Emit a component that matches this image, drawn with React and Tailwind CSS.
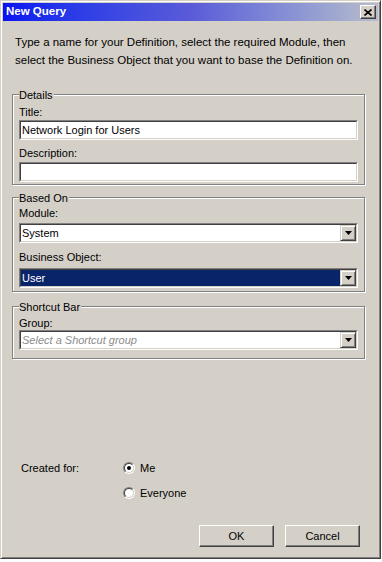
import React from 'react';

const font = { fontFamily: '"Liberation Sans", Arial, sans-serif' };

function GroupBox({ title, children, className = '' }) {
  return (
    <div
      className={`relative ml-[9px] w-[353px] border border-[#808080] shadow-[1px_1px_0_#fff,inset_1px_1px_0_#fff] px-[6px] ${className}`}
    >
      <span className="absolute left-[6px] top-[-6px] bg-[#d4d0c8] pr-[1px] text-[11px] leading-[12px] text-black">
        {title}
      </span>
      {children}
    </div>
  );
}

function Label({ children, className = '' }) {
  return <div className={`text-[11px] leading-[14px] text-black ${className}`}>{children}</div>;
}

function TextBox({ value }) {
  return (
    <div className="h-[20px] w-[339px] border border-t-[#808080] border-l-[#808080] border-b-white border-r-white">
      <div className="flex h-full items-center border border-t-[#404040] border-l-[#404040] border-b-[#d4d0c8] border-r-[#d4d0c8] bg-white px-[1px] text-[11px] text-black">
        {value}
      </div>
    </div>
  );
}

function DropArrow() {
  return (
    <div className="flex h-[16px] w-[16px] items-center justify-center border border-t-[#d4d0c8] border-l-[#d4d0c8] border-b-[#404040] border-r-[#404040] bg-[#d4d0c8] shadow-[inset_1px_1px_0_#fff,inset_-1px_-1px_0_#808080]">
      <svg width="7" height="4" viewBox="0 0 7 4">
        <path d="M0 0h7L3.5 4z" fill="#000" />
      </svg>
    </div>
  );
}

function Combo({ value, selected, placeholder }) {
  return (
    <div className="h-[20px] w-[339px] border border-t-[#808080] border-l-[#808080] border-b-white border-r-white">
      <div className="flex h-full items-center border border-t-[#404040] border-l-[#404040] border-b-[#d4d0c8] border-r-[#d4d0c8] bg-white">
        <div
          className={`flex h-full flex-1 items-center px-[1px] text-[11px] ${
            selected ? 'bg-[#0a246a] text-white' : placeholder ? 'italic text-[#8c8c8c]' : 'text-black'
          }`}
        >
          {value}
        </div>
        <DropArrow />
      </div>
    </div>
  );
}

function Radio({ checked, label }) {
  return (
    <div className="flex items-center gap-[5px]">
      <div className="h-[12px] w-[12px] rounded-full border border-t-[#808080] border-l-[#808080] border-b-white border-r-white">
        <div className="flex h-full w-full items-center justify-center rounded-full border border-t-[#404040] border-l-[#404040] border-b-[#d4d0c8] border-r-[#d4d0c8] bg-white">
          {checked && <div className="h-[4px] w-[4px] rounded-full bg-black" />}
        </div>
      </div>
      <span className="text-[11px] leading-[14px] text-black">{label}</span>
    </div>
  );
}

function Button({ children }) {
  return (
    <div className="h-[22px] w-[75px] border border-t-white border-l-white border-b-[#404040] border-r-[#404040] bg-[#d4d0c8] shadow-[inset_-1px_-1px_0_#808080]">
      <div className="flex h-full items-center justify-center text-[11px] text-black">{children}</div>
    </div>
  );
}

export default function App() {
  return (
    <div className="h-[562px] w-[382px] bg-white" style={font}>
      <div className="flex h-[559px] w-[381px] flex-col border border-t-[#d4d0c8] border-l-[#d4d0c8] border-b-[#404040] border-r-[#404040] bg-[#d4d0c8] shadow-[inset_1px_1px_0_#fff,inset_-1px_-1px_0_#808080] p-[2px]">
        {/* Title bar */}
        <div className="flex h-[18px] items-center justify-between bg-gradient-to-r from-[#0a10f0] via-[#5a5ad8] to-[#b8bcca] pl-[3px] pr-[2px]">
          <span className="text-[11.5px] font-bold text-white">New Query</span>
          <div className="flex h-[14px] w-[16px] items-center justify-center border border-t-white border-l-white border-b-[#404040] border-r-[#404040] bg-[#d4d0c8] shadow-[inset_-1px_-1px_0_#808080]">
            <svg width="8" height="7" viewBox="0 0 8 7">
              <path d="M0.5 0.5L7.5 6.5M7.5 0.5L0.5 6.5" stroke="#000" strokeWidth="1.6" />
            </svg>
          </div>
        </div>

        {/* Instructions */}
        <div className="mt-[12px] pl-[12px] text-[11.5px] leading-[18px] text-black">
          Type a name for your Definition, select the required Module, then
          <br />
          select the Business Object that you want to base the Definition on.
        </div>

        <GroupBox title="Details" className="mt-[25px] pt-[10px] pb-[2px]">
          <Label>Title:</Label>
          <div className="mt-[1px]">
            <TextBox value="Network Login for Users" />
          </div>
          <Label className="mt-[6px]">Description:</Label>
          <div className="mt-[2px]">
            <TextBox value="" />
          </div>
        </GroupBox>

        <GroupBox title="Based On" className="mt-[12px] pt-[8px] pb-[3px]">
          <Label>Module:</Label>
          <div className="mt-[3px]">
            <Combo value="System" />
          </div>
          <Label className="mt-[7px]">Business Object:</Label>
          <div className="mt-[4px]">
            <Combo value="User" selected />
          </div>
        </GroupBox>

        <GroupBox title="Shortcut Bar" className="mt-[14px] pt-[9px] pb-[8px]">
          <Label>Group:</Label>
          <Combo value="Select a Shortcut group" placeholder />
        </GroupBox>

        <div className="mt-[102px] flex pl-[18px]">
          <div className="w-[102px] text-[11px] leading-[14px] text-black">Created for:</div>
          <div className="flex flex-col gap-[11px]">
            <Radio checked label="Me" />
            <Radio label="Everyone" />
          </div>
        </div>

        <div className="mt-[25px] flex justify-end gap-[11px] pr-[18px]">
          <Button>OK</Button>
          <Button>Cancel</Button>
        </div>
      </div>
    </div>
  );
}
